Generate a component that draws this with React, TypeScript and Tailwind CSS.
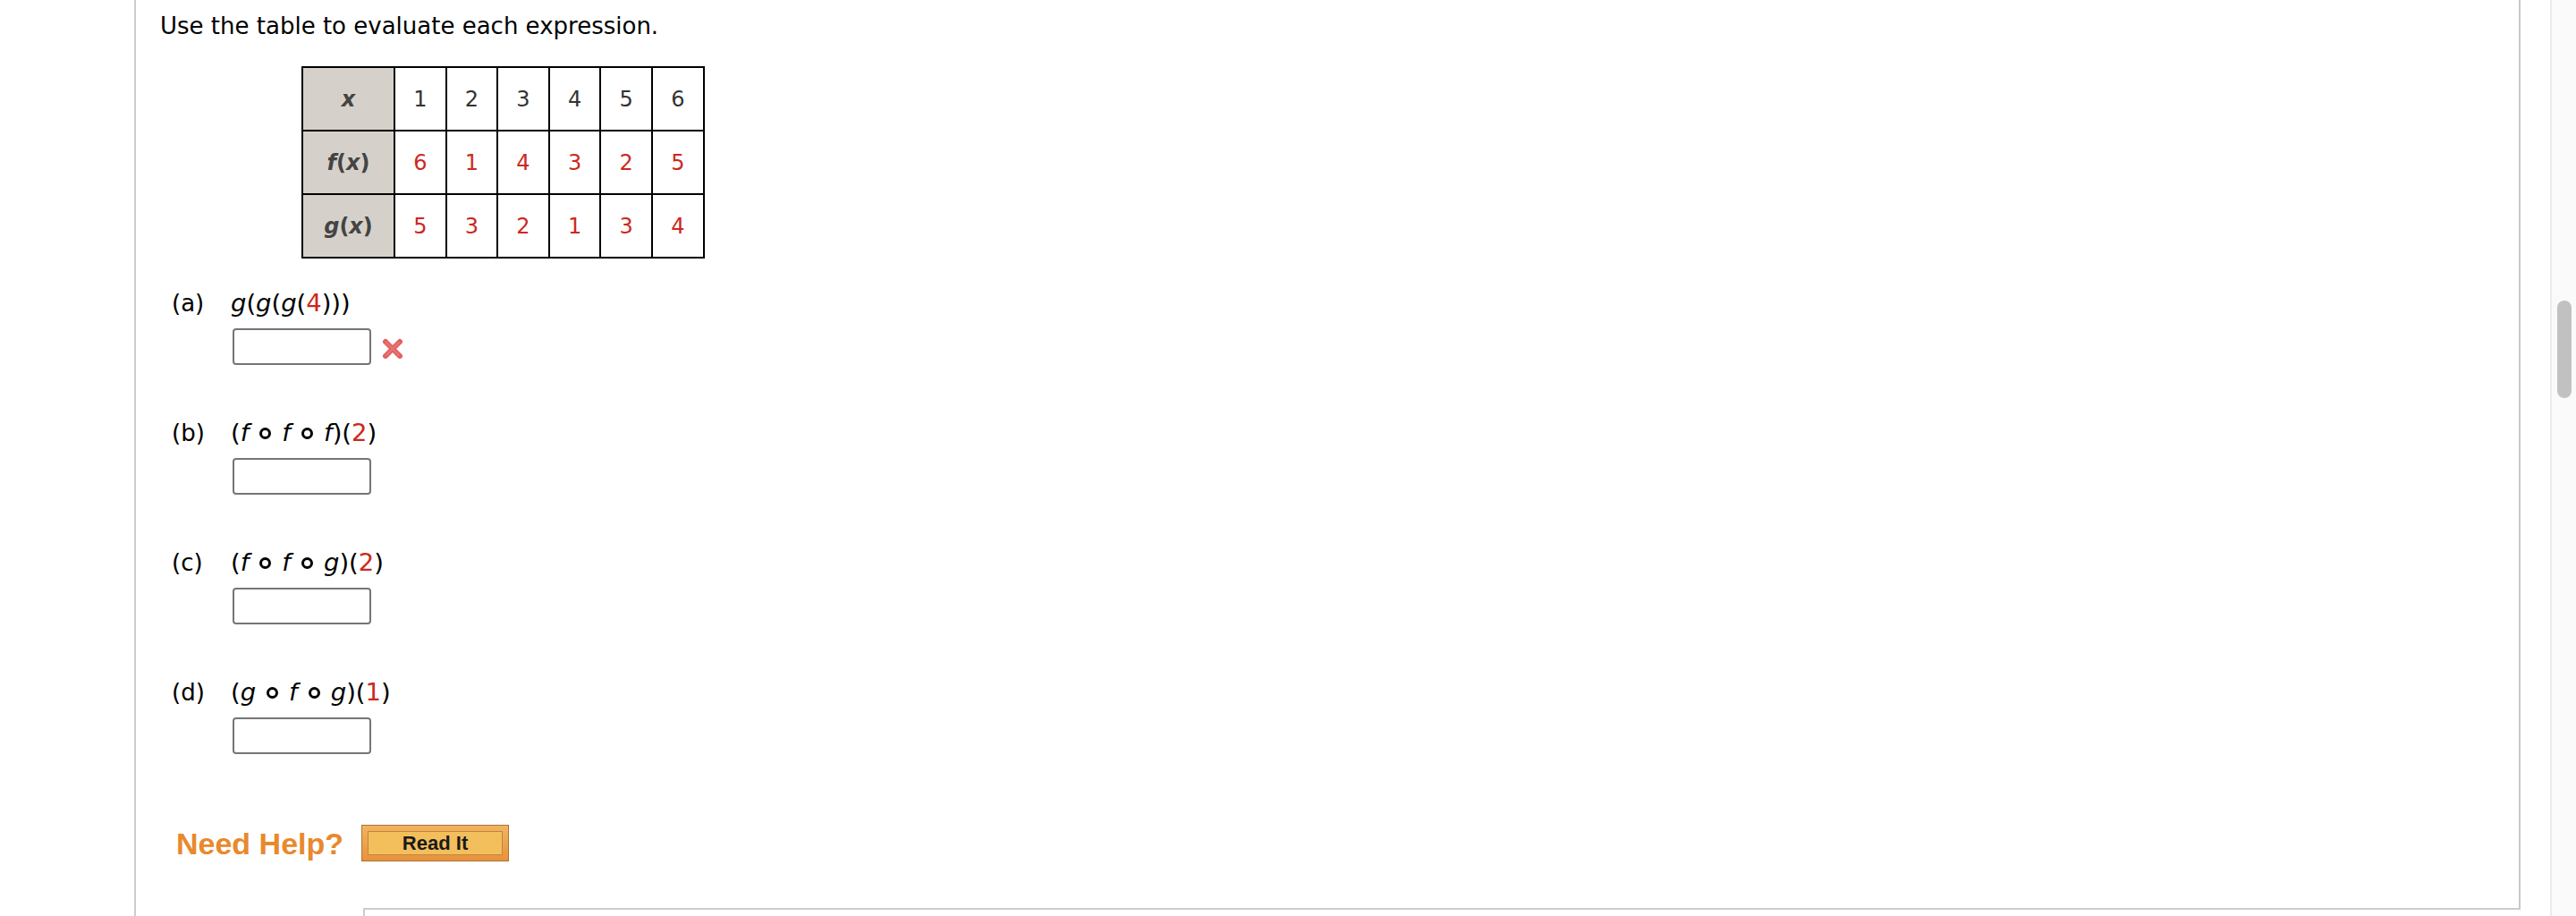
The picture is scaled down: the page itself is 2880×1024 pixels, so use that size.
const xs = [1, 2, 3, 4, 5, 6];
const fx = [6, 1, 4, 3, 2, 5];
const gx = [5, 3, 2, 1, 3, 4];

function Red({ children }: { children: React.ReactNode }) {
  return <span className="text-[#cc2820]">{children}</span>;
}

function Ring() {
  return <span className="mx-[12px] inline-block h-[13px] w-[13px] rounded-full border-[3px] border-black align-[1px]" />;
}

function WrongMark() {
  return (
    <svg width="28" height="28" viewBox="0 0 28 28" className="ml-[10px] mt-[5px]">
      <path d="M6 6 L22 22 M22 6 L6 22" stroke="#e26060" strokeWidth="6" strokeLinecap="round" />
      <path d="M7 7 L21 21 M21 7 L7 21" stroke="#ee8a8a" strokeWidth="2" strokeLinecap="round" opacity="0.5" />
    </svg>
  );
}

function Question({ label, expr, wrong }: { label: string; expr: React.ReactNode; wrong?: boolean }) {
  return (
    <div className="flex flex-col">
      <div className="flex h-[32px] items-center leading-[32px]">
        <span className="w-[66px]">{label}</span>
        <span className="flex items-center text-[27.4px]">{expr}</span>
      </div>
      <div className="mt-[12px] ml-[68px] flex items-center">
        <div className="h-[41px] w-[155px] rounded-[4px] border-2 border-[#757575] bg-white" />
        {wrong && <WrongMark />}
      </div>
    </div>
  );
}

function Cell({ children, head, red }: { children: React.ReactNode; head?: boolean; red?: boolean }) {
  return (
    <div
      className={
        "flex h-[71px] items-center justify-center border-r-2 border-b-2 border-black text-[24px] " +
        (head ? "bg-[#d5d1ca] font-bold italic text-[#444444]" : red ? "text-[#cc2820]" : "text-[#333333]")
      }
    >
      {children}
    </div>
  );
}

export default function App() {
  return (
    <div className="flex h-[1024px] w-[2880px] overflow-hidden bg-white font-['DejaVu_Sans',sans-serif] text-[26px] text-black">
      <div className="w-[150px] shrink-0" />
      <div className="flex flex-1 flex-col border-l-2 border-[#cccccc]">
        <div className="flex flex-col border-r-2 border-[#c8c8c8] pl-[27px] pt-[13px] pb-[52px]">
          <p className="leading-[32px]">Use the table to evaluate each expression.</p>

          <div className="mt-[29px] ml-[158px] grid w-fit grid-cols-[103px_repeat(6,57.6px)] border-t-2 border-l-2 border-black">
            <Cell head>x</Cell>
            {xs.map((v) => (
              <Cell key={"x" + v}>{v}</Cell>
            ))}
            <Cell head>
              f<span className="not-italic">(</span>x<span className="not-italic">)</span>
            </Cell>
            {fx.map((v, i) => (
              <Cell key={"f" + i} red>
                {v}
              </Cell>
            ))}
            <Cell head>
              g<span className="not-italic">(</span>x<span className="not-italic">)</span>
            </Cell>
            {gx.map((v, i) => (
              <Cell key={"g" + i} red>
                {v}
              </Cell>
            ))}
          </div>

          <div className="mt-[34px] ml-[13px] flex flex-col gap-[60px]">
            <Question
              label="(a)"
              wrong
              expr={
                <>
                  <i>g</i>(<i>g</i>(<i>g</i>(<Red>4</Red>)))
                </>
              }
            />
            <Question
              label="(b)"
              expr={
                <>
                  (<i>f</i>
                  <Ring />
                  <i>f</i>
                  <Ring />
                  <i>f</i>)(<Red>2</Red>)
                </>
              }
            />
            <Question
              label="(c)"
              expr={
                <>
                  (<i>f</i>
                  <Ring />
                  <i>f</i>
                  <Ring />
                  <i>g</i>)(<Red>2</Red>)
                </>
              }
            />
            <Question
              label="(d)"
              expr={
                <>
                  (<i>g</i>
                  <Ring />
                  <i>f</i>
                  <Ring />
                  <i>g</i>)(<Red>1</Red>)
                </>
              }
            />
          </div>

          <div className="mt-[79px] ml-[18px] flex h-[41px] items-center gap-[20px]">
            <span className="font-['Liberation_Sans',sans-serif] text-[34px] leading-none font-bold text-[#e8892e]">Need Help?</span>
            <button className="flex h-[41px] w-[165px] items-center justify-center border border-[#a8743a] bg-gradient-to-b from-[#f2b45e] to-[#e8923a] p-[6px]">
              <span className="flex h-full w-full items-center justify-center border border-[#c08444] bg-[#f3bf5c] font-['Liberation_Sans',sans-serif] text-[22px] leading-none font-bold text-[#1a1a1a]">
                Read It
              </span>
            </button>
          </div>
        </div>
        <div className="ml-[254px] flex-1 border-t-2 border-l-2 border-[#cccccc]" />
      </div>
      <div className="w-[33px] shrink-0" />
      <div className="flex w-[29px] shrink-0 justify-center border-l-2 border-[#ebebeb] bg-[#fafafa] pt-[336px]">
        <div className="h-[109px] w-[16px] rounded-full bg-[#c1c1c1]" />
      </div>
    </div>
  );
}
